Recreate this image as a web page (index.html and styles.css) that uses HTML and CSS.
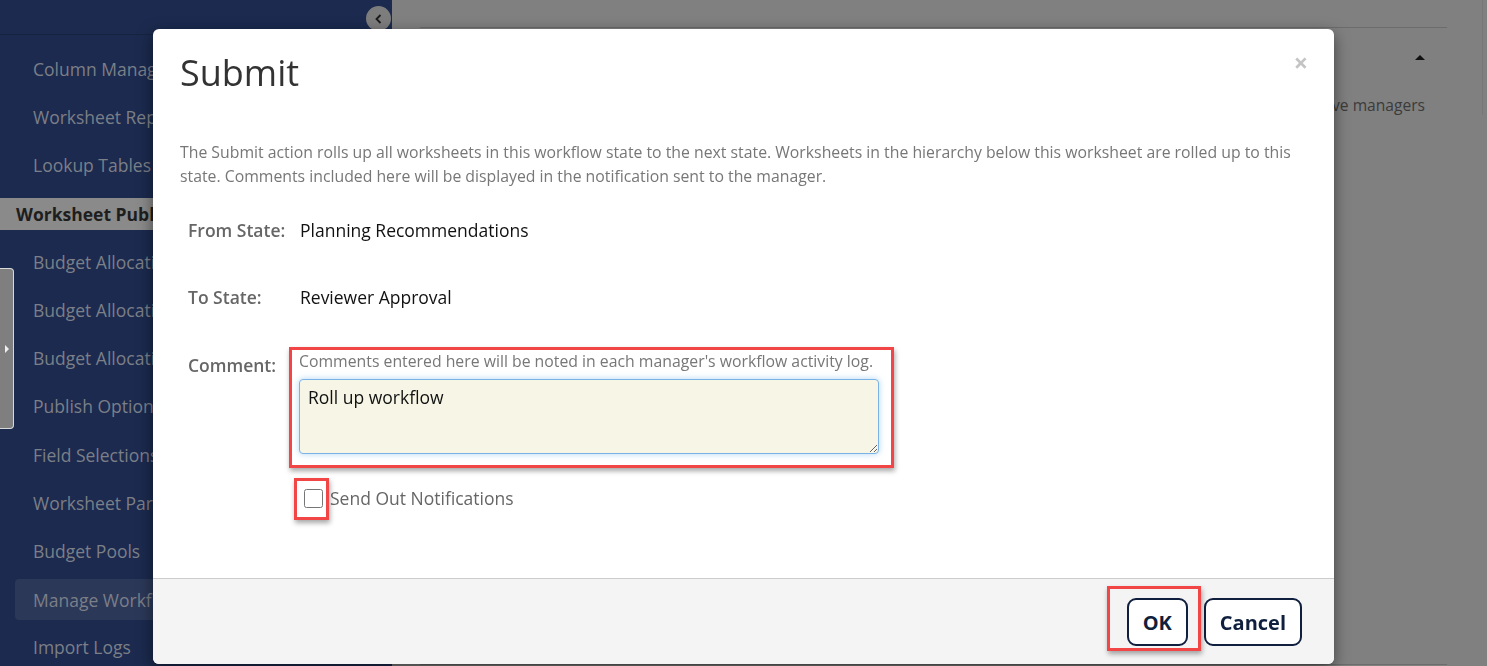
FILE: index.html
```html
<!DOCTYPE html>
<html lang="en">
<head>
    <meta charset="UTF-8">
    <meta name="viewport" content="width=device-width, initial-scale=1.0">
    <title>Manage Workflow - Submit</title>
    <link rel="stylesheet" href="styles.css">
</head>
<body>
    <div class="app">
        <aside class="sidebar">
            <div class="side-top">
                <button class="collapse" type="button" aria-label="Collapse">
                    <svg width="12" height="12" viewBox="0 0 12 12"><path d="M7.5 2 L3.5 6 L7.5 10" fill="none" stroke="#1b1b1b" stroke-width="1.8"/></svg>
                </button>
            </div>
            <nav class="side-nav">
                <a class="side-item">Column Management</a>
                <a class="side-item">Worksheet Reports</a>
                <a class="side-item">Lookup Tables</a>
                <div class="side-group"><span>Worksheet Publishing</span></div>
                <a class="side-item">Budget Allocation Rules</a>
                <a class="side-item">Budget Allocation Groups</a>
                <a class="side-item">Budget Allocation Rounding</a>
                <a class="side-item">Publish Options</a>
                <a class="side-item">Field Selections</a>
                <a class="side-item">Worksheet Parameters</a>
                <a class="side-item">Budget Pools</a>
                <a class="side-item active">Manage Workflow</a>
                <a class="side-item">Import Logs</a>
            </nav>
            <div class="side-handle"><span class="handle-arrow"></span></div>
        </aside>
        <main class="main">
            <div class="panel">
                <div class="panel-head"><span class="caret"></span></div>
                <p class="panel-note">Submitted worksheets are routed to their respective managers</p>
            </div>
            <div class="scroll-edge"></div>
        </main>
    </div>

    <div class="modal">
        <div class="modal-header">
            <h2 class="modal-title">Submit</h2>
            <button class="close" type="button" aria-label="Close">&times;</button>
        </div>
        <div class="modal-body">
            <p class="intro">The Submit action rolls up all worksheets in this workflow state to the next state. Worksheets in the hierarchy below this worksheet are rolled up to this state. Comments included here will be displayed in the notification sent to the manager.</p>
            <div class="form-row">
                <span class="label">From State:</span>
                <span class="value">Planning Recommendations</span>
            </div>
            <div class="form-row">
                <span class="label">To State:</span>
                <span class="value">Reviewer Approval</span>
            </div>
            <div class="form-row">
                <span class="label comment-label">Comment:</span>
                <div class="comment-field">
                    <p class="hint">Comments entered here will be noted in each manager's workflow activity log.</p>
                    <textarea class="comment-box">Roll up workflow</textarea>
                    <span class="mark mark-comment"></span>
                </div>
            </div>
            <div class="notify-row">
                <span class="check-wrap">
                    <input type="checkbox" id="notify">
                    <span class="mark mark-check"></span>
                </span>
                <label for="notify">Send Out Notifications</label>
            </div>
        </div>
        <div class="modal-footer">
            <span class="btn-wrap">
                <button class="btn" type="button">OK</button>
                <span class="mark mark-ok"></span>
            </span>
            <button class="btn" type="button">Cancel</button>
        </div>
    </div>
</body>
</html>
```

FILE: styles.css
```css
body {
    margin: 0;
    font-family: "Open Sans", "Liberation Sans", sans-serif;
    background-color: #808080;
    overflow: hidden;
}

.app {
    display: flex;
    height: 666px;
}

/* Barra lateral (oscurecida por el fondo del modal) */
.sidebar {
    position: relative;
    width: 392px;
    flex-shrink: 0;
    background-color: #1b2a4e;
}

.side-top {
    height: 35px;
    display: flex;
    justify-content: flex-end;
    align-items: flex-start;
    padding-top: 6px;
    box-sizing: border-box;
    border-bottom: 1px solid #17243f;
}

.collapse {
    width: 25px;
    height: 25px;
    margin-right: 1px;
    border: none;
    border-radius: 50%;
    background-color: #7d7d7d;
    padding: 0;
    display: flex;
    align-items: center;
    justify-content: center;
}

.side-nav {
    display: flex;
    flex-direction: column;
    padding-top: 10px;
}

.side-item {
    display: flex;
    align-items: center;
    height: 48.2px;
    padding-left: 33px;
    font-size: 17.5px;
    color: #7b7f88;
    white-space: nowrap;
}

.side-item.active {
    margin-left: 15px;
    padding-left: 18px;
    height: 41px;
    margin-top: 4px;
    margin-bottom: 3px;
    border-radius: 4px;
    background-color: #2b3858;
}

.side-group {
    display: flex;
    align-items: center;
    height: 48.2px;
}

.side-group span {
    flex: 1;
    height: 32px;
    line-height: 32px;
    padding-left: 16px;
    background-color: #8a8a8a;
    color: #1e1e1e;
    font-weight: 700;
    font-size: 17.5px;
    white-space: nowrap;
}

.side-handle {
    position: absolute;
    left: 0;
    top: 268px;
    width: 13px;
    height: 159px;
    background-color: #7f7f7f;
    border: 1px solid #d8d8d8;
    border-left: none;
    border-radius: 0 4px 4px 0;
    display: flex;
    align-items: center;
    justify-content: center;
}

.handle-arrow {
    width: 0;
    height: 0;
    border-top: 4px solid transparent;
    border-bottom: 4px solid transparent;
    border-left: 4px solid #f0f0f0;
}

/* Contenido principal */
.main {
    flex: 1;
    display: flex;
    padding-left: 28px;
}

.panel {
    width: 1027px;
    margin-top: 27px;
    height: 636px;
    border-top: 1px solid #6c6c6c;
    border-bottom: 1px solid #6c6c6c;
}

.panel-head {
    height: 58px;
    display: flex;
    justify-content: flex-end;
    align-items: center;
    padding-right: 22px;
}

.caret {
    width: 0;
    height: 0;
    border-left: 5px solid transparent;
    border-right: 5px solid transparent;
    border-bottom: 5px solid #111111;
}

.panel-note {
    margin: 7px 0 0;
    text-align: right;
    padding-right: 22px;
    font-size: 15.6px;
    line-height: 24px;
    color: #3b3b3b;
    white-space: nowrap;
    overflow: hidden;
}

.scroll-edge {
    width: 1px;
    height: 115px;
    margin-left: 35px;
    background-color: #777777;
}

/* Modal */
.modal {
    position: fixed;
    left: 153px;
    top: 29px;
    width: 1181px;
    height: 635px;
    background-color: #ffffff;
    border-radius: 6px;
    box-shadow: 0 5px 15px rgba(0, 0, 0, 0.5);
    display: flex;
    flex-direction: column;
    overflow: hidden;
}

.modal-header {
    display: flex;
    justify-content: space-between;
    align-items: flex-start;
    padding: 24px 26px 0 27px;
}

.modal-title {
    margin: 0;
    font-size: 36px;
    line-height: 40px;
    font-weight: 400;
    color: #333333;
}

.close {
    border: none;
    background: none;
    padding: 0;
    margin-top: -3px;
    font-family: "Open Sans", "Liberation Sans", sans-serif;
    font-size: 25px;
    line-height: 24px;
    font-weight: 700;
    color: #c4c4c4;
}

.modal-body {
    flex: 1;
    padding: 0 36px 0 27px;
}

.intro {
    margin: 47px 0 30px;
    font-size: 15.8px;
    line-height: 24px;
    color: #777777;
}

.form-row {
    display: grid;
    grid-template-columns: 120px 1fr;
    margin-bottom: 43px;
    font-size: 17.5px;
    line-height: 24px;
}

.label {
    padding-left: 8px;
    font-weight: 600;
    color: #666666;
}

.value {
    color: #111111;
}

.comment-label {
    padding-top: 1px;
}

.comment-field {
    position: relative;
    width: 580px;
    margin-top: -3px;
    margin-left: -1px;
}

.hint {
    margin: 0 0 6px;
    font-size: 15.8px;
    line-height: 24px;
    color: #777777;
    white-space: nowrap;
}

.comment-box {
    display: block;
    box-sizing: border-box;
    width: 580px;
    height: 75px;
    padding: 5px 8px;
    font-family: "Open Sans", "Liberation Sans", sans-serif;
    font-size: 17.5px;
    line-height: 24px;
    color: #111111;
    background-color: #f7f6e6;
    border: 1px solid #79b3e6;
    border-radius: 4px;
    box-shadow: 0 0 6px rgba(102, 175, 233, 0.5);
    outline: none;
}

.notify-row {
    display: flex;
    align-items: center;
    gap: 7px;
    margin: -11px 0 0 120px;
    font-size: 17.5px;
    line-height: 24px;
    color: #666666;
}

.check-wrap {
    position: relative;
    display: flex;
    margin-left: 4px;
}

.check-wrap input {
    width: 19px;
    height: 19px;
    margin: 0;
}

/* Marcas rojas de la captura */
.mark {
    position: absolute;
    border: 3px solid #f24646;
    box-shadow: 1px 3px 5px rgba(0, 0, 0, 0.35);
    pointer-events: none;
}

.mark-comment {
    left: -10px;
    top: -2px;
    right: -15px;
    bottom: -14px;
}

.mark-check {
    left: -10px;
    top: -11px;
    right: -6px;
    bottom: -12px;
}

.mark-ok {
    left: -20px;
    top: -12px;
    right: -13px;
    bottom: -5px;
}

.modal-footer {
    height: 86px;
    box-sizing: border-box;
    border-top: 1px solid #cccccc;
    background-color: #f4f4f4;
    display: flex;
    justify-content: flex-end;
    align-items: flex-start;
    gap: 16px;
    padding: 19px 32px 0 0;
}

.btn-wrap {
    position: relative;
    display: flex;
}

.btn {
    height: 48px;
    padding: 0 14px;
    background-color: #ffffff;
    border: 2px solid #0f1f3d;
    border-radius: 9px;
    font-family: "Open Sans", "Liberation Sans", sans-serif;
    font-size: 20px;
    font-weight: 700;
    color: #0f1f3d;
}
```
